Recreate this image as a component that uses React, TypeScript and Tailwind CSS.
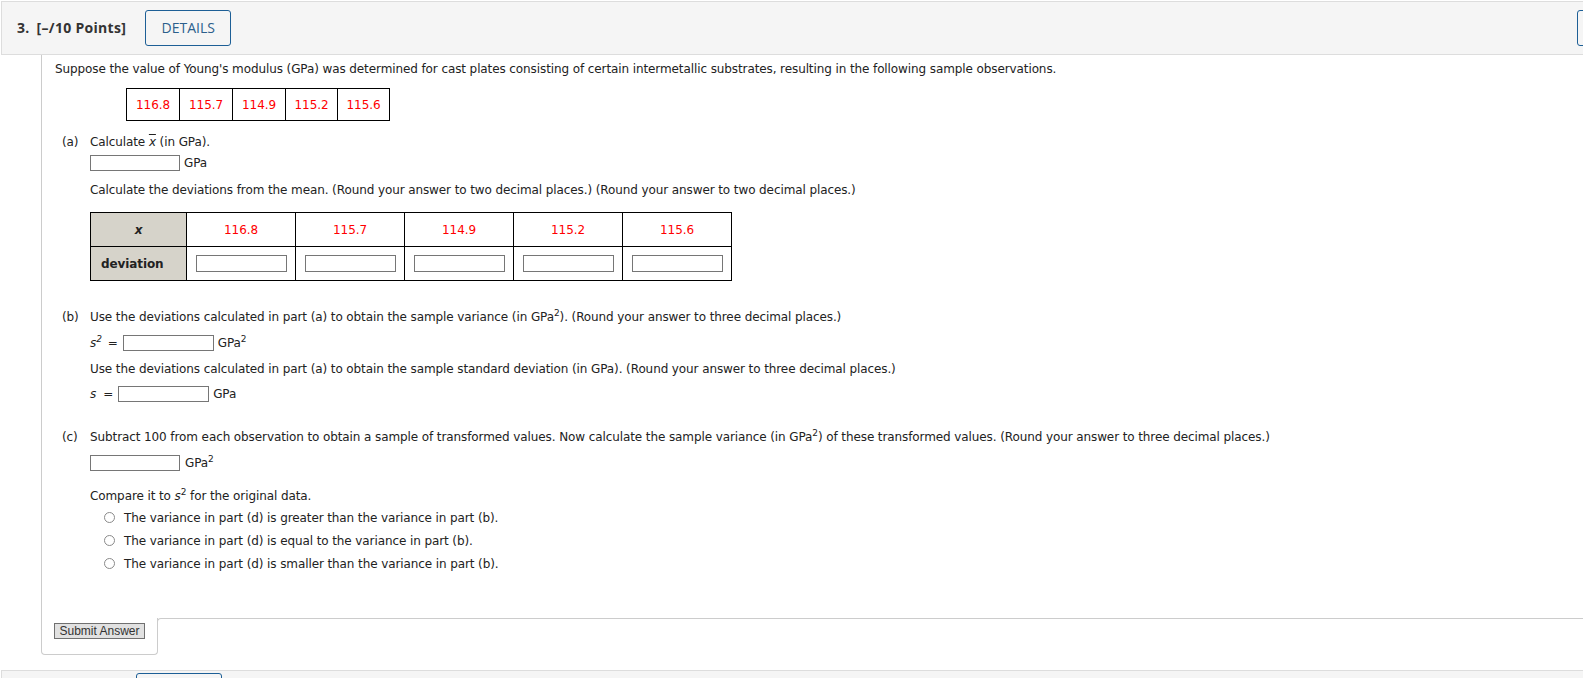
import React from "react";

const F = "font-['DejaVu_Sans',sans-serif] tracking-[-0.1px]";

function Inp({ w = "w-[90px]" }: { w?: string }) {
  return <span className={`inline-block ${w} h-[16px] border border-[#767676] bg-white align-middle shrink-0`} />;
}

function Sup() {
  return <sup className="text-[9px] leading-none relative -top-[5px]">2</sup>;
}

function Radio({ text }: { text: string }) {
  return (
    <div className="h-[23px] flex items-center">
      <span className="ml-[49px] w-[11px] h-[11px] rounded-full border border-[#8a8a8a] bg-white" />
      <span className="ml-[9px]">{text}</span>
    </div>
  );
}

export default function App() {
  const vals = ["116.8", "115.7", "114.9", "115.2", "115.6"];
  const w1 = ["w-[52px]", "w-[53px]", "w-[53px]", "w-[52px]", "w-[52px]"];
  return (
    <div className={`w-[1583px] h-[678px] overflow-hidden bg-white text-[12px] leading-[16px] text-[#222] ${F}`}>
      <div className="h-px" />
      {/* header */}
      <div className="ml-px h-[54px] border-y border-l border-[#ddd] bg-[#f5f5f5] flex items-center font-['Open_Sans',sans-serif] tracking-normal text-[#333] relative">
        <span className="ml-[15px] text-[14px] font-bold tracking-[0.3px]">3.</span>
        <span className="ml-[7px] text-[14px] font-bold tracking-[0.3px]">[–/10 Points]</span>
        <span className="ml-[19px] w-[86px] h-[36px] rounded-[3px] border border-[#1d5f96] flex items-center justify-center text-[14px] text-[#2c5f8c]">
          DETAILS
        </span>
        <span className="absolute left-[1575px] top-[8px] w-[60px] h-[36px] rounded-[3px] border border-[#1d5f96]" />
      </div>

      {/* panel */}
      <div className="ml-[41px] border-l border-[#ccc] pl-[13px] pt-[6px] pb-[44px]">
        <div>
          Suppose the value of Young's modulus (GPa) was determined for cast plates consisting of certain intermetallic substrates, resulting in the following sample observations.
        </div>
        <div className="mt-[11px] ml-[71px] flex border border-black w-fit">
          {vals.map((v, i) => (
            <div
              key={v}
              className={`${w1[i]} shrink-0 h-[31px] flex items-center justify-center text-[#ff0000] ${i > 0 ? "border-l border-black" : ""}`}
            >
              {v}
            </div>
          ))}
        </div>

        {/* (a) */}
        <div className="mt-[13px] flex">
          <div className="ml-[7px] w-[28px] shrink-0">(a)</div>
          <div className="flex-1">
            <div>
              Calculate <span className="italic overline">x</span> (in GPa).
            </div>
            <div className="mt-[5px] flex items-center h-[16px]">
              <Inp />
              <span className="ml-[4px]">GPa</span>
            </div>
            <div className="mt-[11px]">
              Calculate the deviations from the mean. (Round your answer to two decimal places.) (Round your answer to two decimal places.)
            </div>
            <div className="mt-[14px] w-fit border border-black">
              <div className="flex h-[33px]">
                <div className="w-[95px] shrink-0 bg-[#d6d3ca] flex items-center justify-center font-bold italic">x</div>
                {vals.map((v) => (
                  <div key={v} className="w-[109px] shrink-0 border-l border-black flex items-center justify-center text-[#ff0000]">
                    {v}
                  </div>
                ))}
              </div>
              <div className="flex h-[34px] border-t border-black">
                <div className="w-[95px] shrink-0 bg-[#d6d3ca] flex items-center pl-[10px] font-bold">deviation</div>
                {vals.map((v) => (
                  <div key={v} className="w-[109px] shrink-0 border-l border-black flex items-center justify-center">
                    <span className="inline-block w-[91px] h-[17px] border border-[#767676]" />
                  </div>
                ))}
              </div>
            </div>
          </div>
        </div>

        {/* (b) */}
        <div className="mt-[28px] flex">
          <div className="ml-[7px] w-[28px] shrink-0">(b)</div>
          <div className="flex-1">
            <div>
              Use the deviations calculated in part (a) to obtain the sample variance (in GPa<Sup />). (Round your answer to three decimal places.)
            </div>
            <div className="mt-[10px] flex items-center h-[16px]">
              <span className="italic">
                s<Sup />
              </span>
              <span className="ml-[6px] mr-[5px]">=</span>
              <Inp w="w-[91px]" />
              <span className="ml-[4px]">
                GPa<Sup />
              </span>
            </div>
            <div className="mt-[10px]">
              Use the deviations calculated in part (a) to obtain the sample standard deviation (in GPa). (Round your answer to three decimal places.)
            </div>
            <div className="mt-[9px] flex items-center h-[16px]">
              <span className="italic">s</span>
              <span className="ml-[7px] mr-[5px]">=</span>
              <Inp w="w-[91px]" />
              <span className="ml-[4px]">GPa</span>
            </div>
          </div>
        </div>

        {/* (c) */}
        <div className="mt-[27px] flex">
          <div className="ml-[7px] w-[28px] shrink-0">(c)</div>
          <div className="flex-1">
            <div>
              Subtract 100 from each observation to obtain a sample of transformed values. Now calculate the sample variance (in GPa<Sup />) of these transformed values. (Round your answer to three decimal places.)
            </div>
            <div className="mt-[10px] flex items-center h-[16px]">
              <Inp />
              <span className="ml-[5px]">
                GPa<Sup />
              </span>
            </div>
          </div>
        </div>
        <div className="mt-[17px] ml-[35px]">
          Compare it to <span className="italic">s</span>
          <Sup /> for the original data.
        </div>
        <div className="mt-[2px]">
          <Radio text="The variance in part (d) is greater than the variance in part (b)." />
          <Radio text="The variance in part (d) is equal to the variance in part (b)." />
          <Radio text="The variance in part (d) is smaller than the variance in part (b)." />
        </div>
      </div>

      {/* submit tab row */}
      <div className="flex -mt-px">
        <div className="ml-[41px] w-[117px] h-[37px] border-l border-b border-r border-[#ccc] rounded-b-[4px] pt-[5px] pl-[12px]">
          <button className="w-[91px] h-[16px] bg-[#e1e1e1] border border-[#707070] text-[12px] leading-[14px] tracking-normal text-[#333] font-['Liberation_Sans',Arial,sans-serif] flex items-center justify-center">
            Submit Answer
          </button>
        </div>
        <div className="flex-1 h-[6px] border-t border-l border-[#ccc] rounded-tl-[4px] -ml-px" />
      </div>

      {/* next header */}
      <div className="mt-[15px] ml-px h-[54px] border-t border-l border-[#ddd] bg-[#f5f5f5] relative">
        <span className="absolute left-[134px] top-[2px] w-[86px] h-[36px] rounded-[3px] border border-[#1d5f96]" />
        <span className="absolute left-[1576px] top-[8px] w-[60px] h-[36px] rounded-[3px] border border-[#1d5f96]" />
      </div>
    </div>
  );
}
